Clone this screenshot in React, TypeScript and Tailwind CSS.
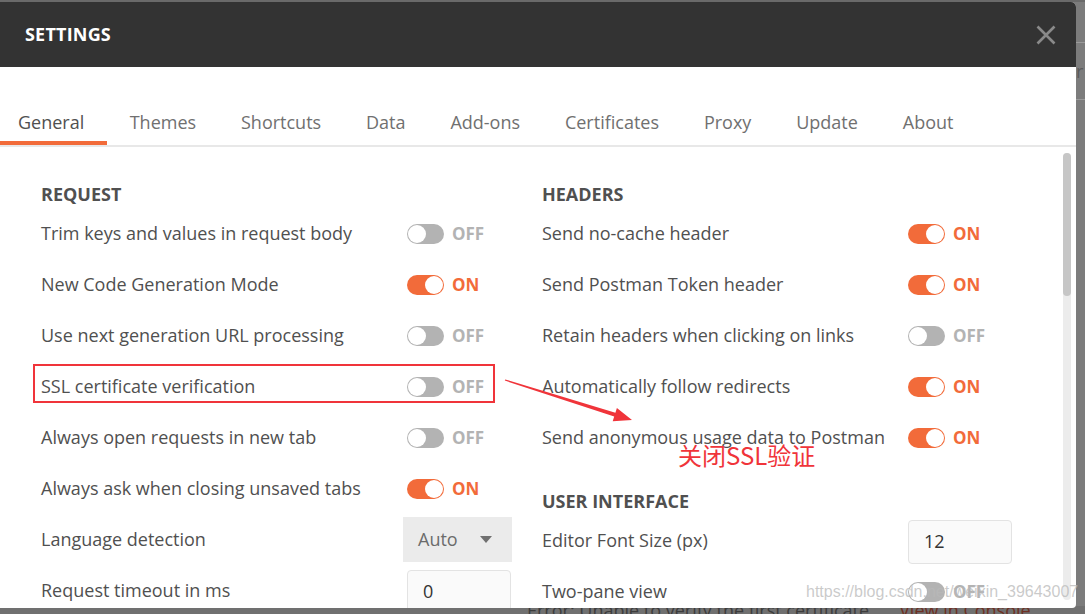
import React from "react";

type Row =
  | { label: string; kind: "toggle"; on: boolean }
  | { label: string; kind: "select"; value: string }
  | { label: string; kind: "input"; value: string };

const requestRows: Row[] = [
  { label: "Trim keys and values in request body", kind: "toggle", on: false },
  { label: "New Code Generation Mode", kind: "toggle", on: true },
  { label: "Use next generation URL processing", kind: "toggle", on: false },
  { label: "SSL certificate verification", kind: "toggle", on: false },
  { label: "Always open requests in new tab", kind: "toggle", on: false },
  { label: "Always ask when closing unsaved tabs", kind: "toggle", on: true },
  { label: "Language detection", kind: "select", value: "Auto" },
  { label: "Request timeout in ms", kind: "input", value: "0" },
];

const headerRows: Row[] = [
  { label: "Send no-cache header", kind: "toggle", on: true },
  { label: "Send Postman Token header", kind: "toggle", on: true },
  { label: "Retain headers when clicking on links", kind: "toggle", on: false },
  { label: "Automatically follow redirects", kind: "toggle", on: true },
  { label: "Send anonymous usage data to Postman", kind: "toggle", on: true },
];

const uiRows: Row[] = [
  { label: "Editor Font Size (px)", kind: "input", value: "12" },
  { label: "Two-pane view", kind: "toggle", on: false },
];

const tabs = ["General", "Themes", "Shortcuts", "Data", "Add-ons", "Certificates", "Proxy", "Update", "About"];

const Toggle: React.FC<{ on: boolean }> = ({ on }) => (
  <div className="flex items-center gap-[8px]">
    <div
      className={
        "w-[37px] h-[20px] rounded-full p-[1px] flex " +
        (on ? "bg-[#f26b3a] justify-end" : "bg-[#b3b3b3] justify-start")
      }
    >
      <div className="w-[18px] h-[18px] rounded-full bg-white" />
    </div>
    <span className={"text-[17px] font-bold leading-none " + (on ? "text-[#f26b3a]" : "text-[#b3b3b3]")}>
      {on ? "ON" : "OFF"}
    </span>
  </div>
);

const Control: React.FC<{ row: Row }> = ({ row }) => {
  if (row.kind === "toggle") return <Toggle on={row.on} />;
  if (row.kind === "select")
    return (
      <div className="ml-[-4px] w-[109px] h-[45px] bg-[#ebebeb] flex items-center justify-between pl-[15px] pr-[20px] text-[18px] text-[#6b6b6b]">
        <span>{row.value}</span>
        <svg width="12" height="8" viewBox="0 0 12 8">
          <path d="M0 0 L12 0 L6 7 Z" fill="#707070" />
        </svg>
      </div>
    );
  return (
    <div className="w-[104px] h-[44px] mt-[2px] bg-[#fafafa] border border-[#e3e3e3] rounded-[4px] flex items-center pl-[15px] text-[18px] text-[#333]">
      {row.value}
    </div>
  );
};

const SettingRow: React.FC<{ row: Row }> = ({ row }) => (
  <div className="h-[51px] shrink-0 flex items-center">
    <div className="w-[366px] text-[18px] text-[#505050]">{row.label}</div>
    <Control row={row} />
  </div>
);

const SectionTitle: React.FC<{ children: React.ReactNode; className?: string }> = ({ children, className }) => (
  <div className={"h-[28px] shrink-0 flex items-center text-[18px] font-bold text-[#505050] " + (className ?? "")}>
    {children}
  </div>
);

export default function App() {
  return (
    <div
      className="relative w-[1085px] h-[614px] overflow-hidden bg-[#7c7c7c]"
      style={{ fontFamily: '"Open Sans", "Noto Sans", sans-serif' }}
    >
      {/* app behind the dialog */}
      <div className="flex flex-col h-full">
        <div className="h-[2px] shrink-0 bg-[#6a6a6a]" />
        <div className="flex-1 flex justify-end">
          <div className="w-[9px] flex flex-col">
            <div className="h-[40px]" />
            <div className="h-[1px] bg-[#9a9a9a]" />
            <div className="h-[56px] overflow-hidden text-[18px] text-[#5a5a5a] leading-[56px]">r</div>
            <div className="h-[1px] bg-[#9a9a9a]" />
          </div>
        </div>
        <div className="h-[8px] shrink-0 overflow-hidden bg-[#707070] flex items-start pl-[527px] text-[18px] leading-[28px] text-[#3c3c3c]">
          <span className="-mt-[10px]">Error: Unable to verify the first certificate</span>
          <span className="-mt-[10px] ml-[30px] text-[#6e2f22]">View in Console</span>
        </div>
      </div>

      {/* settings dialog */}
      <div className="absolute left-0 top-[2px] w-[1076px] h-[606px] bg-white rounded-tr-[5px] rounded-br-[4px] overflow-hidden flex flex-col">
        <div className="h-[65px] shrink-0 bg-[#333333] flex items-center justify-between pl-[25px] pr-[20px]">
          <span className="text-[18px] font-bold text-white tracking-[0.2px]">SETTINGS</span>
          <svg width="20" height="20" viewBox="0 0 20 20">
            <path d="M1.5 1.5 L18.5 18.5 M18.5 1.5 L1.5 18.5" stroke="#8a8a8a" strokeWidth="2.6" />
          </svg>
        </div>

        <div className="shrink-0 pt-[43px] flex items-end border-b-2 border-[#e8e8e8]">
          {tabs.map((t, i) => (
            <div
              key={t}
              className={
                "text-[18px] leading-[24px] pb-[7px] border-b-4 " +
                (i === 0
                  ? "pl-[18px] pr-[23px] border-[#f26b3a] text-[#505050]"
                  : "px-[22.45px] border-transparent text-[#707070]")
              }
            >
              {t}
            </div>
          ))}
        </div>

        <div className="flex-1 flex min-h-0">
          <div className="flex-1 flex pl-[41px] pt-[33px] gap-[30px] overflow-hidden">
            <div className="w-[471px] flex flex-col">
              <SectionTitle>REQUEST</SectionTitle>
              {requestRows.map((r) => (
                <SettingRow key={r.label} row={r} />
              ))}
            </div>
            <div className="w-[470px] flex flex-col">
              <SectionTitle>HEADERS</SectionTitle>
              {headerRows.map((r) => (
                <SettingRow key={r.label} row={r} />
              ))}
              <SectionTitle className="mt-[24px]">USER INTERFACE</SectionTitle>
              {uiRows.map((r) => (
                <SettingRow key={r.label} row={r} />
              ))}
            </div>
          </div>
          <div className="w-[8px] mr-[5px] mt-[6px] mb-[8px] bg-[#ececec] rounded-full flex flex-col">
            <div className="h-[143px] bg-[#c6c6c6] rounded-full" />
          </div>
        </div>
      </div>

      {/* annotation overlay */}
      <div className="absolute left-[33px] top-[364px] w-[462px] h-[39px] border-2 border-[#f0343a]" />
      <svg className="absolute inset-0 pointer-events-none" width="1085" height="614">
        <polygon
          points="505.2,379.4 615.4,412.7 616.9,407.9 632,420 612.7,421.3 614.2,416.5 504.8,380.6"
          fill="#f0343a"
        />
      </svg>
      <div
        className="absolute left-[678px] top-[439px] text-[24px] leading-[32px] text-[#f0343a]"
        style={{ fontFamily: '"Noto Sans CJK SC", sans-serif' }}
      >
        关闭SSL验证
      </div>
      <div
        className="absolute left-[806px] top-[581px] text-[16px] leading-[22px] text-[rgba(185,185,185,0.75)]"
        style={{ fontFamily: '"Liberation Sans", Arial, sans-serif' }}
      >
        https://blog.csdn.net/weixin_39643007
      </div>
    </div>
  );
}
